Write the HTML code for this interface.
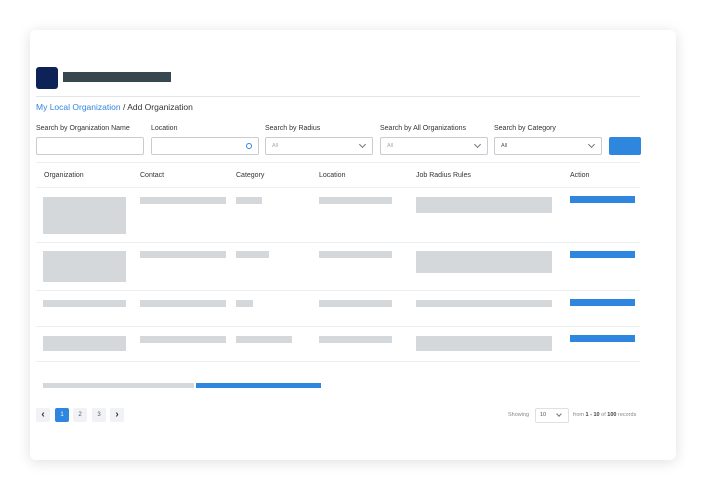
<!DOCTYPE html><html><head><style>
*{margin:0;padding:0;box-sizing:border-box}
body{width:706px;height:490px;background:#fff;font-family:"Liberation Sans",sans-serif;position:relative;overflow:hidden}
.card{position:absolute;left:30px;top:30px;width:646px;height:430px;background:#fff;border-radius:6px;box-shadow:0 2px 14px rgba(0,0,0,.13)}
.a{position:absolute}
.g{position:absolute;background:#d5d8db}
.b{position:absolute;background:#2e86de}
.l{position:absolute;height:1px;background:#eceef0;left:36px;width:604px}
.lab{position:absolute;font-size:7px;color:#333;top:125px}
.in{position:absolute;top:137px;height:18px;width:108px;border:1px solid #c9ccd1;border-radius:2px;font-size:5.5px;color:#aaa;padding:5px 0 0 6px}
.ch{position:absolute;right:7px;top:4px;width:5px;height:5px;border-right:1px solid #777;border-bottom:1px solid #777;transform:rotate(45deg)}
.th{position:absolute;top:172px;font-size:7px;color:#333}
.pg{position:absolute;top:408px;width:14px;height:14px;background:#f0f2f5;border-radius:2px;font-size:6px;color:#555;text-align:center;line-height:14px}
.ar{font-size:10px;font-weight:bold;color:#333;line-height:13px}
</style></head><body>
<div class="card"></div>
<div class="a" style="left:36px;top:67px;width:22px;height:22px;background:#0d2357;border-radius:3px"></div>
<div class="a" style="left:63px;top:72px;width:108px;height:10px;background:#37474f"></div>
<div class="a" style="left:36px;top:96px;width:604px;height:1px;background:#e3e5e8"></div>
<div class="a" style="left:36px;top:102px;font-size:8.5px;color:#333"><span style="color:#2e86de">My Local Organization</span> / Add Organization</div>
<div class="lab" style="left:36px">Search by Organization Name</div>
<div class="lab" style="left:151px">Location</div>
<div class="lab" style="left:265px">Search by Radius</div>
<div class="lab" style="left:380px">Search by All Organizations</div>
<div class="lab" style="left:494px">Search by Category</div>
<div class="in" style="left:36px"></div>
<div class="in" style="left:151px"><div class="a" style="right:6px;top:5px;width:6px;height:6px;border:1px solid #2e86de;border-radius:50%"></div></div>
<div class="in" style="left:265px">All<div class="ch"></div></div>
<div class="in" style="left:380px">All<div class="ch"></div></div>
<div class="in" style="left:494px;color:#555">All<div class="ch"></div></div>
<div class="b" style="left:609px;top:137px;width:32px;height:18px;border-radius:2px"></div>
<div class="l" style="top:162px"></div>
<div class="th" style="left:44px">Organization</div>
<div class="th" style="left:140px">Contact</div>
<div class="th" style="left:236px">Category</div>
<div class="th" style="left:319px">Location</div>
<div class="th" style="left:416px">Job Radius Rules</div>
<div class="th" style="left:570px">Action</div>
<div class="l" style="top:187px"></div>
<div class="g" style="left:43px;top:197px;width:83px;height:37px"></div>
<div class="g" style="left:140px;top:197px;width:86px;height:7px"></div>
<div class="g" style="left:236px;top:197px;width:26px;height:7px"></div>
<div class="g" style="left:319px;top:197px;width:73px;height:7px"></div>
<div class="g" style="left:416px;top:197px;width:136px;height:16px"></div>
<div class="b" style="left:570px;top:196px;width:65px;height:7px"></div>
<div class="l" style="top:242px"></div>
<div class="g" style="left:43px;top:251px;width:83px;height:31px"></div>
<div class="g" style="left:140px;top:251px;width:86px;height:7px"></div>
<div class="g" style="left:236px;top:251px;width:33px;height:7px"></div>
<div class="g" style="left:319px;top:251px;width:73px;height:7px"></div>
<div class="g" style="left:416px;top:251px;width:136px;height:22px"></div>
<div class="b" style="left:570px;top:251px;width:65px;height:7px"></div>
<div class="l" style="top:290px"></div>
<div class="g" style="left:43px;top:300px;width:83px;height:7px"></div>
<div class="g" style="left:140px;top:300px;width:86px;height:7px"></div>
<div class="g" style="left:236px;top:300px;width:17px;height:7px"></div>
<div class="g" style="left:319px;top:300px;width:73px;height:7px"></div>
<div class="g" style="left:416px;top:300px;width:136px;height:7px"></div>
<div class="b" style="left:570px;top:299px;width:65px;height:7px"></div>
<div class="l" style="top:326px"></div>
<div class="g" style="left:43px;top:336px;width:83px;height:15px"></div>
<div class="g" style="left:140px;top:336px;width:86px;height:7px"></div>
<div class="g" style="left:236px;top:336px;width:56px;height:7px"></div>
<div class="g" style="left:319px;top:336px;width:73px;height:7px"></div>
<div class="g" style="left:416px;top:336px;width:136px;height:15px"></div>
<div class="b" style="left:570px;top:335px;width:65px;height:7px"></div>
<div class="l" style="top:361px"></div>
<div class="g" style="left:43px;top:383px;width:151px;height:5px"></div>
<div class="b" style="left:196px;top:383px;width:125px;height:5px"></div>
<div class="pg ar" style="left:36px">&#8249;</div>
<div class="pg" style="left:55px;background:#2e86de;color:#fff">1</div>
<div class="pg" style="left:73px">2</div>
<div class="pg" style="left:92px">3</div>
<div class="pg ar" style="left:110px">&#8250;</div>
<div class="a" style="left:508px;top:412px;font-size:5.5px;color:#888">Showing</div>
<div class="a" style="left:535px;top:408px;width:34px;height:15px;border:1px solid #dde0e4;border-radius:2px;font-size:5.5px;color:#555;padding:3px 0 0 4px">10<div class="ch" style="top:3px;width:4px;height:4px"></div></div>
<div class="a" style="left:573px;top:412px;font-size:5.5px;color:#888">from <b style="color:#444">1 - 10</b> of <b style="color:#444">100</b> records</div>
</body></html>
